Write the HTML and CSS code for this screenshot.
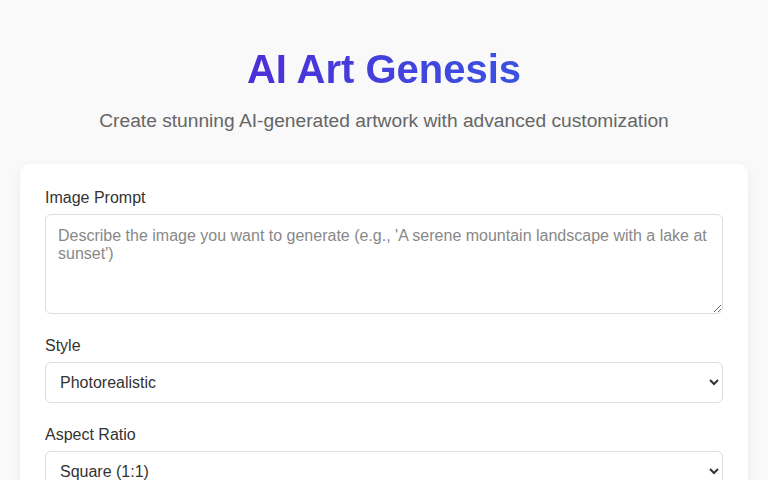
FILE: index.html
```html
<!DOCTYPE html>
<html lang="en">
<head>
<meta charset="UTF-8">
<title>AI Art Genesis</title>
<link rel="stylesheet" href="styles.css">
</head>
<body>
<div class="container">
  <header class="header">
    <h1 class="title">AI Art Genesis</h1>
    <p class="subtitle">Create stunning AI-generated artwork with advanced customization</p>
  </header>
  <main class="card">
    <div class="form-group">
      <label class="label" for="prompt">Image Prompt</label>
      <textarea id="prompt" class="field textarea" placeholder="Describe the image you want to generate (e.g., 'A serene mountain landscape with a lake at sunset')"></textarea>
    </div>
    <div class="form-group">
      <label class="label" for="style">Style</label>
      <select id="style" class="field select">
        <option>Photorealistic</option>
        <option>Digital Art</option>
        <option>Oil Painting</option>
      </select>
    </div>
    <div class="form-group">
      <label class="label" for="ratio">Aspect Ratio</label>
      <select id="ratio" class="field select">
        <option>Square (1:1)</option>
        <option>Landscape (16:9)</option>
        <option>Portrait (9:16)</option>
      </select>
    </div>
  </main>
</div>
</body>
</html>
```
FILE: styles.css
```css
* { box-sizing: border-box; }
body {
  margin: 0;
  background: #f9f9f9;
  font-family: "Liberation Sans", Arial, sans-serif;
  color: #333;
}
.container {
  max-width: 768px;
  margin: 0 auto;
  padding: 20px;
}
.header {
  text-align: center;
  padding: 20px 0 32px;
}
.title {
  margin: 0 0 12px;
  font-size: 40px;
  line-height: 58px;
  font-weight: 700;
  background: linear-gradient(90deg, #4c2fd8, #3b52e0);
  -webkit-background-clip: text;
  background-clip: text;
  color: transparent;
  display: inline-block;
}
.subtitle {
  margin: 0;
  font-size: 19.2px;
  color: #666;
}
.card {
  background: #fff;
  border-radius: 10px;
  padding: 25px;
  box-shadow: 0 4px 12px rgba(0,0,0,0.06);
}
.form-group {
  margin-bottom: 23px;
}
.label {
  display: block;
  font-size: 16px;
  line-height: 18px;
  margin-bottom: 7px;
  color: #333;
}
.field {
  width: 100%;
  border: 1px solid #ddd;
  border-radius: 6px;
  font-family: "Liberation Sans", Arial, sans-serif;
  font-size: 16px;
  color: #333;
  background: #fff;
}
.textarea {
  height: 100px;
  padding: 12px;
  resize: vertical;
  display: block;
}
.textarea::placeholder { color: #888; }
.select {
  height: 41px;
  padding: 0 10px;
  display: block;
}
```
